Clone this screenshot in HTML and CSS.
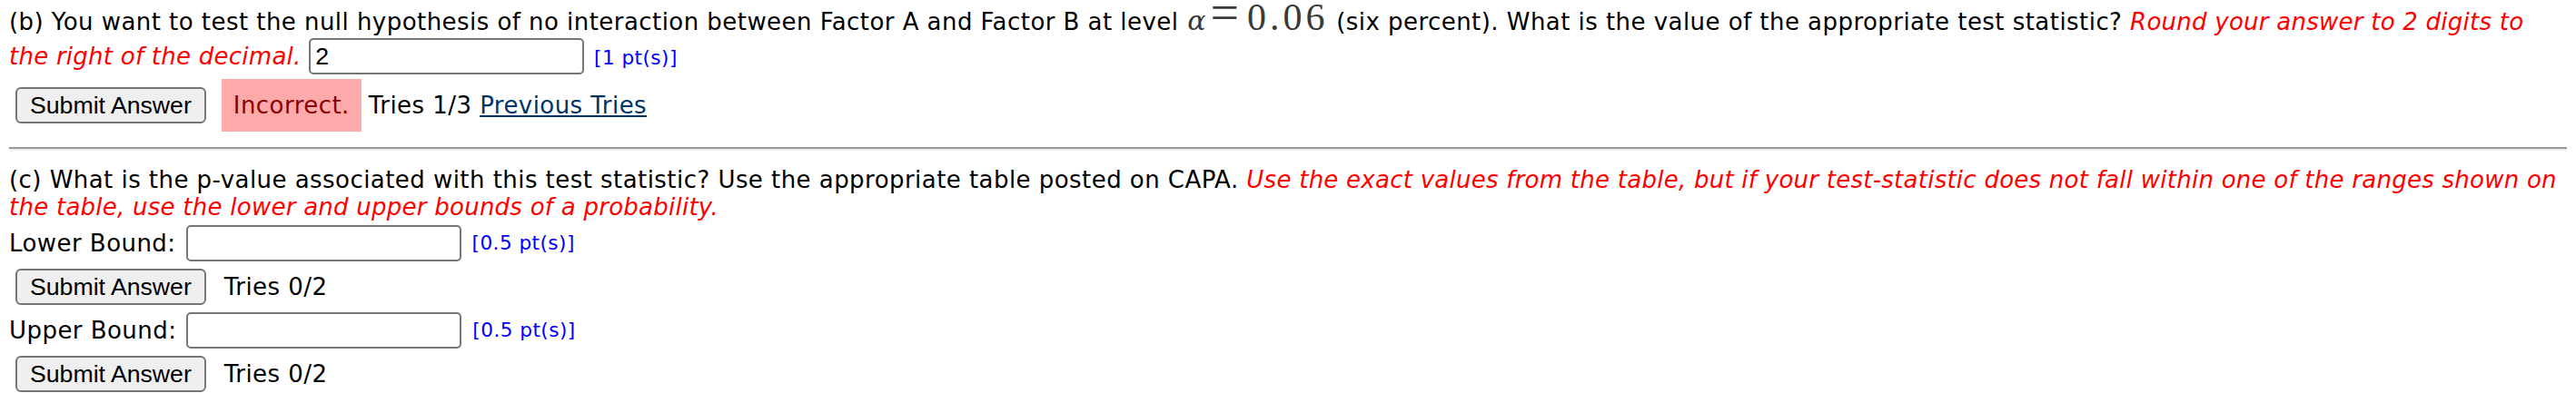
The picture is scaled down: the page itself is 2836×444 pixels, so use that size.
FILE: index.html
```html
<!DOCTYPE html>
<html lang="en">
<head>
  <meta charset="UTF-8">
  <title>Problem Part</title>
  <link rel="stylesheet" href="styles.css">
</head>
<body>
  <!-- Part (b) -->
  <div class="part">
    <p class="question">(b) You want to test the null hypothesis of no interaction between Factor A and Factor B at level <span class="math"><span class="alpha">α</span><span class="eq">=</span>0.06</span> (six percent). What is the value of the appropriate test statistic? <em class="hint">Round your answer to 2 digits to<br>the right of the decimal.</em> <input class="answer" type="text" value="2"> <span class="points">[1 pt(s)]</span></p>
    <div class="submit-row tall">
      <button class="submit-btn">Submit Answer</button>
      <span class="status incorrect">Incorrect.</span>
      <span class="tries">Tries 1/3 <a href="#" class="prev-tries">Previous Tries</a></span>
    </div>
  </div>

  <hr class="divider">

  <!-- Part (c) -->
  <div class="part">
    <p class="question">(c) What is the p-value associated with this test statistic? Use the appropriate table posted on CAPA. <em class="hint">Use the exact values from the table, but if your test-statistic does not fall within one of the ranges shown on the table, use the lower and upper bounds of a probability.</em></p>
    <div class="rows">
      <div class="field-row">
        <span class="label">Lower Bound:</span>
        <input class="answer" type="text">
        <span class="points">[0.5 pt(s)]</span>
      </div>
      <div class="submit-row">
        <button class="submit-btn">Submit Answer</button>
        <span class="tries spaced">Tries 0/2</span>
      </div>
      <div class="field-row">
        <span class="label">Upper Bound:</span>
        <input class="answer" type="text">
        <span class="points">[0.5 pt(s)]</span>
      </div>
      <div class="submit-row">
        <button class="submit-btn">Submit Answer</button>
        <span class="tries spaced">Tries 0/2</span>
      </div>
    </div>
  </div>
</body>
</html>
```

FILE: styles.css
```css
/* Page */
body {
  margin: 0;
  padding: 9px 10px 0 10px;
  font-family: "DejaVu Sans", Verdana, sans-serif;
  font-size: 26px;
  line-height: 30px;
  letter-spacing: 0.45px;
  color: #000000;
  background-color: #FFFFFF;
}

.question {
  margin: 0;
}

.hint {
  color: #FF0000;
  font-style: italic;
  letter-spacing: 0.25px;
}

/* Inline math (alpha = 0.06) */
.math {
  font-family: "Liberation Serif", "Times New Roman", serif;
  font-size: 42px;
  line-height: 20px;
  color: #3a3a3a;
  letter-spacing: 4px;
}

.alpha {
  font-family: "DejaVu Serif", serif;
  font-style: italic;
  font-size: 30px;
  letter-spacing: 0;
  margin-left: 1px;
}

.eq {
  font-size: 56px;
  line-height: 10px;
  letter-spacing: 0;
  margin: 0 9px 0 5px;
}

/* Inputs */
.answer {
  box-sizing: border-box;
  width: 303px;
  height: 40px;
  margin: 3px 0 0 0;
  padding: 0 5px;
  border: 2px solid #767676;
  border-radius: 5px;
  font-family: "Liberation Sans", Arial, sans-serif;
  font-size: 26.67px;
  letter-spacing: 0;
  color: #000000;
  background-color: #FFFFFF;
}

.points {
  font-size: 21.6px;
  color: #0000FF;
  margin-left: 2px;
}

/* Submit rows */
.submit-row {
  display: flex;
  align-items: center;
  height: 40px;
}

.submit-row.tall {
  height: 58px;
  margin-top: 5px;
}

.submit-btn {
  box-sizing: border-box;
  height: 40px;
  margin-left: 7px;
  padding: 0 14px;
  border: 2px solid #767676;
  border-radius: 6px;
  background-color: #EFEFEF;
  font-family: "Liberation Sans", Arial, sans-serif;
  font-size: 26.67px;
  letter-spacing: 0;
  color: #000000;
}

.status {
  align-self: stretch;
  display: flex;
  align-items: center;
  padding: 0 13px;
  margin-left: 17px;
}

.incorrect {
  background-color: #FFAAAA;
  color: #8A0000;
}

.tries {
  margin-left: 8px;
  white-space: pre;
}

.tries.spaced {
  margin-left: 20px;
}

.prev-tries {
  color: #003366;
  text-decoration: underline;
}

/* Divider */
.divider {
  margin: 17px 0 17px 0;
  border: none;
  border-top: 2px solid #999999;
  border-bottom: 2px solid #EEEEEE;
}

/* Part (c) rows */
.rows {
  display: flex;
  flex-direction: column;
  gap: 8px;
  margin-top: 5px;
}

.field-row {
  display: flex;
  align-items: center;
  height: 40px;
}

.field-row .answer {
  margin: 0 0 0 11px;
}

.field-row .points {
  margin-left: 12px;
}
```
